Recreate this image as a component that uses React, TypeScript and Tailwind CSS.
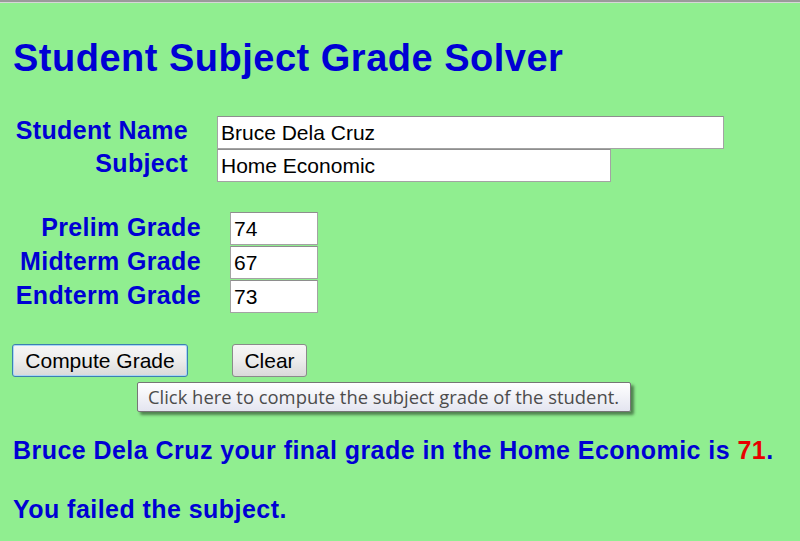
import React from 'react'

const FONT = { fontFamily: '"Liberation Sans", Arial, sans-serif' }

function Field({ value, width }: { value: string; width: string }) {
  return (
    <div
      className={`${width} h-[33px] bg-white border border-[#a3a3a3] border-t-[#8e8e8e] flex items-center pl-[3px] text-[21px] text-black`}
    >
      {value}
    </div>
  )
}

function Button({ label, width, focused }: { label: string; width: string; focused?: boolean }) {
  return (
    <div
      className={`${width} h-[33px] rounded-[3px] border flex items-center justify-center text-[21px] text-black bg-gradient-to-b from-[#f6f6f6] via-[#ececec] to-[#d9d9d9] ${
        focused ? 'border-[#3c7fb1] shadow-[inset_0_0_0_1px_#a9d6f5]' : 'border-[#8a8a8a]'
      }`}
    >
      {label}
    </div>
  )
}

export default function App() {
  return (
    <div className="w-[800px] h-[541px] bg-[#90ee90] overflow-hidden relative" style={FONT}>
      {/* window edge */}
      <div className="h-[3px] bg-[#d6d6d6] border-t-2 border-[#9a9a9a]" />

      <div className="pl-[13px]">
        <h1 className="mt-[33px] text-[38px] leading-[44px] font-bold tracking-[0.5px] text-[#0000d4]">
          Student Subject Grade Solver
        </h1>

        {/* name / subject */}
        <div className="mt-[36px] flex flex-col">
          <div className="flex items-start h-[33px]">
            <div className="w-[175px] text-right text-[25px] leading-[28px] font-bold tracking-[0.35px] text-[#0000d4]">
              Student Name
            </div>
            <div className="ml-[29px]">
              <Field value="Bruce Dela Cruz" width="w-[507px]" />
            </div>
          </div>
          <div className="flex items-start h-[33px]">
            <div className="w-[175px] text-right text-[25px] leading-[28px] font-bold tracking-[0.35px] text-[#0000d4]">
              Subject
            </div>
            <div className="ml-[29px]">
              <Field value="Home Economic" width="w-[394px]" />
            </div>
          </div>
        </div>

        {/* grades */}
        <div className="mt-[30px] flex flex-col gap-[1px]">
          {[
            ['Prelim Grade', '74'],
            ['Midterm Grade', '67'],
            ['Endterm Grade', '73'],
          ].map(([label, value]) => (
            <div key={label} className="flex items-start h-[33px]">
              <div className="w-[188px] text-right text-[25px] leading-[31px] font-bold tracking-[0.35px] text-[#0000d4]">
                {label}
              </div>
              <div className="ml-[29px]">
                <Field value={value} width="w-[88px]" />
              </div>
            </div>
          ))}
        </div>

        {/* buttons */}
        <div className="mt-[31px] flex items-start">
          <div className="-ml-[1px]">
            <Button label="Compute Grade" width="w-[176px]" focused />
          </div>
          <div className="ml-[44px]">
            <Button label="Clear" width="w-[75px]" />
          </div>
        </div>

        <p className="mt-[59px] text-[25px] leading-[28px] font-bold tracking-[0.45px] text-[#0000d4]">
          Bruce Dela Cruz your final grade in the Home Economic is <span className="text-[#e80000]">71</span>.
        </p>
        <p className="mt-[31px] text-[25px] leading-[28px] font-bold tracking-[0.45px] text-[#0000d4]">
          You failed the subject.
        </p>
      </div>

      {/* tooltip */}
      <div
        className="absolute left-[137px] top-[382px] w-[494px] h-[30px] border border-[#767676] rounded-[2px] bg-gradient-to-b from-white to-[#e4e5f0] shadow-[3px_3px_3px_rgba(0,0,0,0.45)] flex items-center pl-[10px] text-[18.4px] text-[#4c4c4c]"
        style={{ fontFamily: '"Open Sans", "Noto Sans", sans-serif' }}
      >
        Click here to compute the subject grade of the student.
      </div>
    </div>
  )
}
